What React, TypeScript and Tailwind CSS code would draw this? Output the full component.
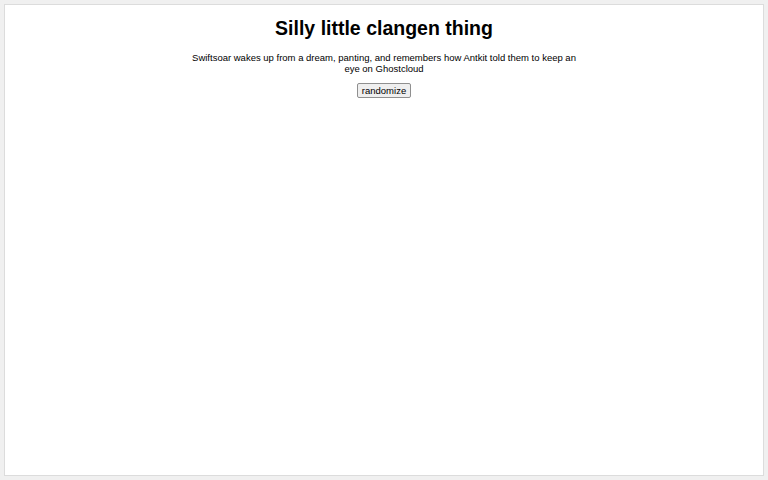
const App = () => {
  return (
    <div className="h-[480px] bg-[#f0f0f0] p-[4px] font-['Liberation_Sans',Arial,sans-serif]">
      <main className="flex h-full flex-col items-center border border-[#dcdcdc] bg-white text-black">
        <h1 className="mt-[11px] text-[19.5px] font-bold leading-[24px]">Silly little clangen thing</h1>
        <p className="mt-[12px] w-[390px] text-center text-[9.5px] leading-[11px]">
          Swiftsoar wakes up from a dream, panting, and remembers how Antkit told them to keep an eye on Ghostcloud
        </p>
        <button className="mt-[9px] rounded-[2px] border border-[#8f8f8f] bg-[#efefef] px-[4px] text-[9.5px] leading-[13px]">
          randomize
        </button>
      </main>
    </div>
  );
};

export default App;
